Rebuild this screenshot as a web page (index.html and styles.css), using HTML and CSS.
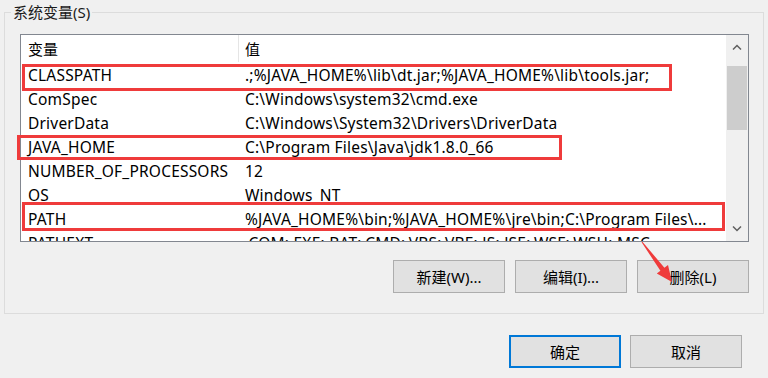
FILE: index.html
```html
<!DOCTYPE html>
<html lang="zh-CN">

<head>
    <meta charset="UTF-8">
    <title>系统变量</title>
    <link rel="stylesheet" href="styles.css">
</head>

<body>
    <!-- System variables group -->
    <fieldset class="group">
        <legend>系统变量(S)</legend>

        <div class="list-wrap">
            <div class="list">
                <div class="list-body">
                    <div class="row head"><span class="name">变量</span><span class="value">值</span></div>
                    <div class="row"><span class="name">CLASSPATH</span><span class="value">.;%JAVA_HOME%\lib\dt.jar;%JAVA_HOME%\lib\tools.jar;</span></div>
                    <div class="row"><span class="name">ComSpec</span><span class="value">C:\Windows\system32\cmd.exe</span></div>
                    <div class="row"><span class="name">DriverData</span><span class="value">C:\Windows\System32\Drivers\DriverData</span></div>
                    <div class="row"><span class="name">JAVA_HOME</span><span class="value">C:\Program Files\Java\jdk1.8.0_66</span></div>
                    <div class="row"><span class="name">NUMBER_OF_PROCESSORS</span><span class="value">12</span></div>
                    <div class="row"><span class="name">OS</span><span class="value">Windows_NT</span></div>
                    <div class="row"><span class="name">PATH</span><span class="value">%JAVA_HOME%\bin;%JAVA_HOME%\jre\bin;C:\Program Files\...</span></div>
                    <div class="row"><span class="name">PATHEXT</span><span class="value">.COM;.EXE;.BAT;.CMD;.VBS;.VBE;.JS;.JSE;.WSF;.WSH;.MSC</span></div>
                </div>

                <div class="scrollbar">
                    <span class="arrow">
                        <svg width="10" height="6" viewBox="0 0 10 6"><polyline points="1,5.5 5,1.5 9,5.5" fill="none" stroke="#606060" stroke-width="1.5"/></svg>
                    </span>
                    <span class="thumb"></span>
                    <span class="arrow down">
                        <svg width="10" height="6" viewBox="0 0 10 6"><polyline points="1,0.5 5,4.5 9,0.5" fill="none" stroke="#606060" stroke-width="1.5"/></svg>
                    </span>
                </div>
            </div>

            <!-- highlight boxes -->
            <div class="mark mark-classpath"></div>
            <div class="mark mark-java"></div>
            <div class="mark mark-path"></div>
        </div>

        <div class="actions">
            <button>新建(W)...</button>
            <button>编辑(I)...</button>
            <button>删除(L)</button>
        </div>
    </fieldset>

    <div class="footer">
        <button class="primary">确定</button>
        <button>取消</button>
    </div>

    <!-- pointer arrow -->
    <svg class="pointer" width="44" height="48" viewBox="0 0 44 48">
        <polygon points="6.4,3.7 28.4,29.7 32,27 36,44 20.8,35.4 24.4,32.7 5.6,4.3" fill="#ef3b3b"/>
    </svg>
</body>

</html>
```

FILE: styles.css
```css
body {
    margin: 0;
    width: 768px;
    height: 378px;
    overflow: hidden;
    background-color: #f0f0f0;
    font-family: "Noto Sans", "Noto Sans CJK SC", sans-serif;
    font-size: 15px;
    color: #000;
}

.group {
    margin: 2px 4px 0;
    padding: 0 14px 20px 15px;
    border: 1px solid #dcdcdc;
}

.group legend {
    margin-left: -9px;
    padding: 0 2px;
    line-height: 20px;
    color: #1a1a1a;
}

/* list view */
.list-wrap {
    position: relative;
    margin-top: 12px;
}

.list {
    display: flex;
    height: 206px;
    border: 1px solid #828790;
    background-color: #fff;
    overflow: hidden;
}

.list-body {
    flex: 1;
    overflow: hidden;
}

.row {
    display: flex;
    align-items: center;
    height: 24px;
    padding-bottom: 1px;
    box-sizing: border-box;
    white-space: nowrap;
    font-size: 15.5px;
    letter-spacing: 0.2px;
}

.row.head {
    height: 28px;
    font-size: 15px;
    letter-spacing: 0;
}

.name {
    flex: none;
    box-sizing: border-box;
    width: 217px;
    padding-left: 7px;
}

.value {
    padding-left: 6px;
    border-left: 1px solid transparent;
}

.row.head .value {
    align-self: stretch;
    display: flex;
    align-items: center;
    border-left-color: #e5e5e5;
}

.scrollbar {
    display: flex;
    flex-direction: column;
    align-items: center;
    width: 22px;
    background-color: #f0f0f0;
}

.scrollbar .arrow {
    display: flex;
    align-items: center;
    justify-content: center;
    width: 22px;
    height: 24px;
}

.scrollbar .thumb {
    width: 20px;
    height: 64px;
    margin-top: 7px;
    background-color: #cdcdcd;
}

.scrollbar .down {
    margin-top: auto;
}

/* red highlight boxes */
.mark {
    position: absolute;
    box-sizing: border-box;
    border: 3px solid #ef3b3b;
}

.mark-classpath {
    left: 2px;
    top: 30px;
    width: 650px;
    height: 27px;
}

.mark-java {
    left: -3px;
    top: 101px;
    width: 545px;
    height: 25px;
}

.mark-path {
    left: 2px;
    top: 168px;
    width: 703px;
    height: 29px;
}

/* buttons */
button {
    width: 112px;
    height: 33px;
    padding: 0;
    background-color: #e1e1e1;
    border: 1px solid #adadad;
    font-family: inherit;
    font-size: 15px;
    color: #000;
}

button.primary {
    border: 2px solid #0078d7;
}

.actions {
    display: flex;
    justify-content: flex-end;
    gap: 10px;
    margin-top: 18px;
}

.footer {
    display: flex;
    justify-content: flex-end;
    gap: 9px;
    padding: 21px 26px 0 0;
}

.pointer {
    position: absolute;
    left: 636px;
    top: 238px;
}
```
